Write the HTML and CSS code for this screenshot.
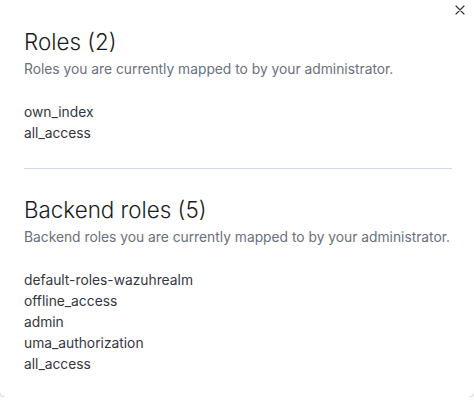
FILE: index.html
```html
<!DOCTYPE html>
<html lang="en">
<head>
    <meta charset="UTF-8">
    <meta name="viewport" content="width=device-width, initial-scale=1.0">
    <title>Roles</title>
    <link rel="stylesheet" href="styles.css">
</head>
<body>
    <div class="modal">
        <button class="modal-close" aria-label="Close">
            <svg width="10" height="10" viewBox="0 0 10 10">
                <path d="M1 1 L9 9 M9 1 L1 9" stroke="#343741" stroke-width="1.2" fill="none" stroke-linecap="round"/>
            </svg>
        </button>

        <div class="modal-body">
            <section class="role-section">
                <h2 class="role-title">Roles (2)</h2>
                <p class="role-desc">Roles you are currently mapped to by your administrator.</p>
                <ul class="role-list">
                    <li>own_index</li>
                    <li>all_access</li>
                </ul>
            </section>

            <hr class="divider">

            <section class="role-section">
                <h2 class="role-title">Backend roles (5)</h2>
                <p class="role-desc">Backend roles you are currently mapped to by your administrator.</p>
                <ul class="role-list">
                    <li>default-roles-wazuhrealm</li>
                    <li>offline_access</li>
                    <li>admin</li>
                    <li>uma_authorization</li>
                    <li>all_access</li>
                </ul>
            </section>
        </div>
    </div>
</body>
</html>
```

FILE: styles.css
```css
* {
    margin: 0;
    padding: 0;
    box-sizing: border-box;
}

body {
    font-family: Inter, "Liberation Sans", sans-serif;
    background: #fff;
    color: #343741;
}

.modal {
    position: relative;
    width: 474px;
    height: 397px;
    background: #fff;
    border-radius: 0 0 6px 6px;
    box-shadow: 0 1px 2px rgba(0, 0, 0, 0.25);
}

.modal-close {
    position: absolute;
    top: 5px;
    right: 9px;
    width: 10px;
    height: 10px;
    border: none;
    background: none;
    display: flex;
}

.modal-body {
    padding: 26px 22px 0 24px;
}

.role-title {
    font-size: 22.4px;
    font-weight: 300;
    line-height: 32px;
    color: #1a1c21;
}

.role-desc {
    font-size: 13.8px;
    line-height: 21px;
    color: #69707d;
    margin-top: 1px;
    white-space: nowrap;
}

.role-list {
    list-style: none;
    margin-top: 22px;
    font-size: 13.8px;
    line-height: 21px;
    color: #343741;
}

.divider {
    border: none;
    border-top: 1px solid #d3dae6;
    margin: 24px 0 25px;
}
```
